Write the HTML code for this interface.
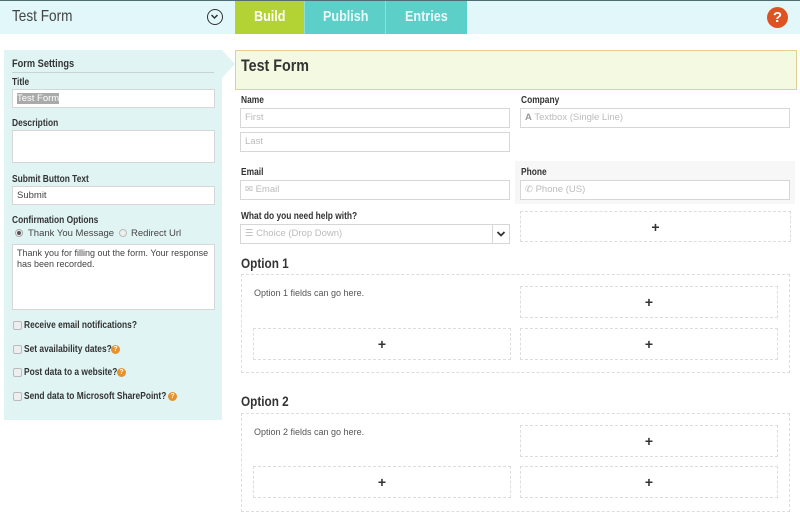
<!DOCTYPE html>
<html><head><style>
*{box-sizing:border-box;margin:0;padding:0}
body{width:800px;height:519px;position:relative;background:#fff;font-family:"Liberation Sans",sans-serif;overflow:hidden}
.a{position:absolute}
.c{font-family:"Liberation Sans",sans-serif;font-weight:bold;color:#333;transform:scaleX(0.84);transform-origin:0 0;white-space:nowrap}
.lab{font-size:10px}
.in{position:absolute;background:#fff;border:1px solid #d6d6d6;font-size:9.5px;color:#bbb;padding:0 4px;line-height:18px;height:20px;white-space:nowrap}
.dash{position:absolute;border:1px dashed #ddd}
.plus{position:absolute;font-size:14px;font-weight:bold;color:#333;text-align:center;width:100%;top:50%;margin-top:-9px;line-height:18px}
.cb{position:absolute;width:9px;height:9px;border:1px solid #bbb;background:#eee;border-radius:2px}
.q{position:absolute;width:9px;height:9px;border-radius:50%;background:#e8912a;color:#fff;font-size:7px;font-weight:bold;line-height:9px;text-align:center}
</style></head><body>
<div class="a" style="left:0;top:0;width:800px;height:34px;background:#e1f7fa;border-top:1px solid #4f6e72"></div>
<div class="a" style="left:12px;top:8px;font-size:16px;color:#444;transform:scaleX(0.85);transform-origin:0 0">Test Form</div>
<div class="a" style="left:207px;top:9px;width:16px;height:16px;border:1.5px solid #333;border-radius:50%"><svg width="13" height="13" viewBox="0 0 13 13" style="position:absolute;left:0;top:0"><path d="M3.5 5l3 3 3-3" stroke="#333" stroke-width="1.5" fill="none"/></svg></div>
<div class="a" style="left:235px;top:1px;width:69px;height:33px;background:#b3d234"></div>
<div class="a c" style="left:254px;top:8px;color:#fff;font-size:15px">Build</div>
<div class="a" style="left:304px;top:1px;width:81px;height:33px;background:#5ccfc8;border-left:1px solid #8ee0da"></div>
<div class="a c" style="left:323px;top:8px;color:#eafafa;font-size:15px">Publish</div>
<div class="a" style="left:385px;top:1px;width:82px;height:33px;background:#5ccfc8;border-left:1px solid #8ee0da"></div>
<div class="a c" style="left:405px;top:8px;color:#eafafa;font-size:15px">Entries</div>
<div class="a" style="left:767px;top:7px;width:21px;height:21px;border-radius:50%;background:#dd5322;color:#fff;font-weight:bold;font-size:15px;text-align:center;line-height:21px">?</div>

<div class="a" style="left:4px;top:50px;width:218px;height:370px;background:#e1f4f4"></div>
<svg class="a" style="left:222px;top:50px" width="14" height="30"><path d="M0 0L13 14L0 28Z" fill="#e1f4f4"/></svg>
<div class="a c" style="left:12px;top:58px;font-size:11px">Form Settings</div>
<div class="a" style="left:12px;top:72px;width:202px;height:1px;background:#c8d4d4"></div>
<div class="a c lab" style="left:12px;top:77px">Title</div>
<div class="in" style="left:12px;top:89px;width:203px;height:19px;line-height:17px;color:#fff"><span style="background:#aaa">Test Form</span></div>
<div class="a c lab" style="left:12px;top:118px">Description</div>
<div class="in" style="left:12px;top:130px;width:203px;height:33px"></div>
<div class="a c lab" style="left:12px;top:174px">Submit Button Text</div>
<div class="in" style="left:12px;top:186px;width:203px;height:19px;line-height:17px;color:#444">Submit</div>
<div class="a c lab" style="left:12px;top:215px">Confirmation Options</div>
<div class="a" style="left:15px;top:229px;width:8px;height:8px;border-radius:50%;border:1px solid #aaa;background:#eee"><div style="width:4px;height:4px;border-radius:50%;background:#555;margin:1px"></div></div>
<div class="a" style="left:28px;top:228px;font-size:9.5px;color:#444">Thank You Message</div>
<div class="a" style="left:119px;top:229px;width:8px;height:8px;border-radius:50%;border:1px solid #bbb;background:#eee"></div>
<div class="a" style="left:131px;top:228px;font-size:9.5px;color:#444">Redirect Url</div>
<div class="in" style="left:12px;top:244px;width:203px;height:66px;color:#444;line-height:11px;padding-top:3px;font-size:9px;white-space:normal">Thank you for filling out the form. Your response has been recorded.</div>
<div class="cb" style="left:13px;top:321px"></div><div class="a c lab" style="left:24px;top:320px">Receive email notifications?</div>
<div class="cb" style="left:13px;top:345px"></div><div class="a c lab" style="left:24px;top:344px">Set availability dates?</div><div class="q" style="left:111px;top:345px">?</div>
<div class="cb" style="left:13px;top:368px"></div><div class="a c lab" style="left:24px;top:367px">Post data to a website?</div><div class="q" style="left:117px;top:368px">?</div>
<div class="cb" style="left:13px;top:392px"></div><div class="a c lab" style="left:24px;top:391px">Send data to Microsoft SharePoint?</div><div class="q" style="left:168px;top:392px">?</div>

<div class="a" style="left:235px;top:50px;width:562px;height:40px;background:#f4fae2;border:1px solid #e6cf8e"></div>
<div class="a c" style="left:241px;top:56px;font-size:17px">Test Form</div>
<div class="a c lab" style="left:241px;top:95px">Name</div>
<div class="in" style="left:240px;top:108px;width:270px">First</div>
<div class="in" style="left:240px;top:132px;width:270px">Last</div>
<div class="a c lab" style="left:521px;top:95px">Company</div>
<div class="in" style="left:520px;top:108px;width:270px"><b style="color:#999">A</b> Textbox (Single Line)</div>
<div class="a" style="left:515px;top:161px;width:280px;height:43px;background:#f7f7f7"></div>
<div class="a c lab" style="left:241px;top:167px">Email</div>
<div class="in" style="left:240px;top:180px;width:270px">✉ Email</div>
<div class="a c lab" style="left:521px;top:167px">Phone</div>
<div class="in" style="left:520px;top:180px;width:270px">✆ Phone (US)</div>
<div class="a c lab" style="left:241px;top:211px">What do you need help with?</div>
<div class="in" style="left:240px;top:224px;width:270px">☰ Choice (Drop Down)</div>
<div class="a" style="left:492px;top:225px;width:1px;height:18px;background:#d6d6d6"></div>
<svg class="a" style="left:496px;top:229px" width="10" height="10"><path d="M1.5 3l3.5 3.5 3.5-3.5" stroke="#333" stroke-width="1.8" fill="none"/></svg>
<div class="dash" style="left:520px;top:211px;width:271px;height:31px"><div class="plus">+</div></div>

<div class="a c" style="left:241px;top:255px;font-size:14px">Option 1</div>
<div class="dash" style="left:241px;top:274px;width:549px;height:99px"></div>
<div class="a" style="left:254px;top:288px;font-size:9px;color:#555">Option 1 fields can go here.</div>
<div class="dash" style="left:520px;top:286px;width:258px;height:32px"><div class="plus">+</div></div>
<div class="dash" style="left:253px;top:328px;width:258px;height:32px"><div class="plus">+</div></div>
<div class="dash" style="left:520px;top:328px;width:258px;height:32px"><div class="plus">+</div></div>

<div class="a c" style="left:241px;top:393px;font-size:14px">Option 2</div>
<div class="dash" style="left:241px;top:413px;width:549px;height:99px"></div>
<div class="a" style="left:254px;top:427px;font-size:9px;color:#555">Option 2 fields can go here.</div>
<div class="dash" style="left:520px;top:425px;width:258px;height:32px"><div class="plus">+</div></div>
<div class="dash" style="left:253px;top:466px;width:258px;height:32px"><div class="plus">+</div></div>
<div class="dash" style="left:520px;top:466px;width:258px;height:32px"><div class="plus">+</div></div>
</body></html>
